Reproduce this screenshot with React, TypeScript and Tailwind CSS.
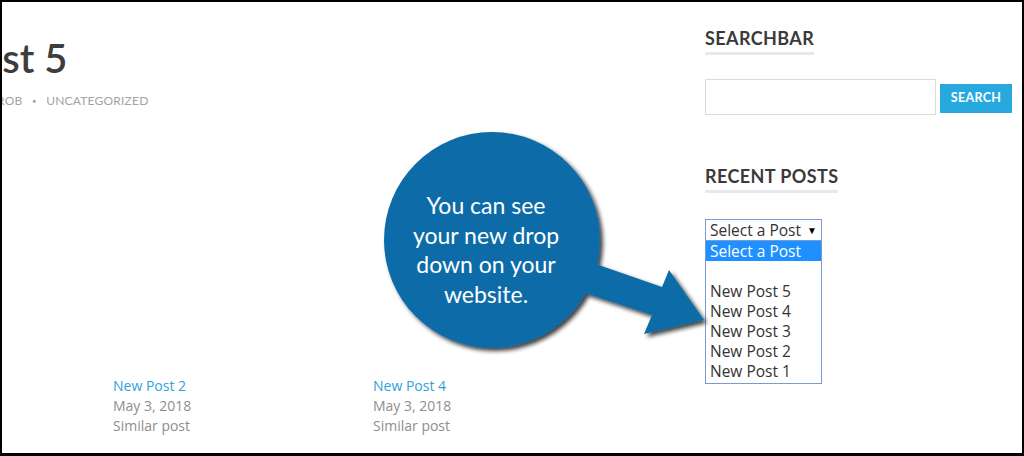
import React from "react"

const heading = "font-['Lato',sans-serif]"
const body = "font-['Open_Sans',sans-serif]"

const posts = ["New Post 5", "New Post 4", "New Post 3", "New Post 2", "New Post 1"]

const related = [
  { title: "New Post 2", date: "May 3, 2018", excerpt: "Similar post" },
  { title: "New Post 4", date: "May 3, 2018", excerpt: "Similar post" },
]

function WidgetTitle({ children, className = "" }: { children: React.ReactNode; className?: string }) {
  return (
    <div className={`flex ${className}`}>
      <h2
        className={`${heading} text-[18px] font-bold leading-[24px] tracking-[0.4px] text-[#3a3a3a] pb-[2px] border-b-[3px] border-[#e8e8ea] uppercase`}
      >
        {children}
      </h2>
    </div>
  )
}

function PostDropdown() {
  return (
    <div className={`mt-[26px] w-[117px] ${body} text-[15.5px] text-[#333]`}>
      <div className="h-[22px] border border-[#7a9bd0] flex items-center justify-between pl-[4px] pr-[4px] leading-[20px]">
        <span>Select a Post</span>
        <span className="text-[10px] text-black">▼</span>
      </div>
      <ul className="border border-t-0 border-[#7a9bd0] pb-[2px] leading-[20px]">
        <li className="h-[20px] bg-[#1e90ff] text-white pl-[4px]">Select a Post</li>
        <li className="h-[20px]" />
        {posts.map(p => (
          <li key={p} className="h-[20px] pl-[4px]">{p}</li>
        ))}
      </ul>
    </div>
  )
}

// speech bubble pointing at the dropdown
function Callout() {
  return (
    <div className="absolute left-[370px] top-[120px] w-[350px] h-[240px] pointer-events-none">
      <svg width="350" height="240" viewBox="0 0 350 240" className="absolute inset-0">
        <defs>
          <filter id="bubbleShadow" x="-10%" y="-10%" width="130%" height="130%">
            <feDropShadow dx="3" dy="3" stdDeviation="2" floodColor="#000" floodOpacity="0.75" />
          </filter>
        </defs>
        <g filter="url(#bubbleShadow)" fill="#0a6ca8">
          <circle cx="120" cy="118" r="108" />
          <polygon points="195,132 290,165 297,148 332,198 272,212 280,193 195,165" />
        </g>
      </svg>
      <div
        className={`absolute left-0 top-[69px] w-[228px] text-center text-white ${heading} text-[23px] leading-[29.5px]`}
      >
        You can see
        <br />
        your new drop
        <br />
        down on your
        <br />
        website.
      </div>
    </div>
  )
}

export default function App() {
  return (
    <div className="relative w-[1024px] h-[456px] bg-white border-black border-t-2 border-l-2 border-r-2 border-b-[3px] overflow-hidden">
      <div className="flex h-full">
        {/* post column */}
        <div className="w-[703px] shrink-0">
          <h1 className={`mt-[32px] -ml-[46px] whitespace-nowrap ${heading} text-[40px] font-semibold leading-[48px] text-[#3d3d3d]`}>
            Post 5
          </h1>
          <div className={`mt-[11px] -ml-[5px] flex items-center ${heading} text-[12px] leading-[16px] tracking-[0.2px] text-[#a3a3a3] uppercase`}>
            <span>Rob</span>
            <span className="mx-[10px] text-[6px]">●</span>
            <span>Uncategorized</span>
          </div>
          <div className={`mt-[267px] pl-[111px] grid grid-cols-[260px_260px] ${body} text-[14px] leading-[20px]`}>
            {related.map(r => (
              <div key={r.title}>
                <a className="block text-[#2ea3d9]">{r.title}</a>
                <div className="text-[#8e8e8e]">{r.date}</div>
                <div className="text-[#8e8e8e]">{r.excerpt}</div>
              </div>
            ))}
          </div>
        </div>

        {/* sidebar */}
        <aside className="w-[307px] shrink-0 pt-[24px]">
          <WidgetTitle>Searchbar</WidgetTitle>
          <div className="mt-[24px] flex items-end gap-[4px]">
            <input className="w-[231px] h-[36px] border border-[#dcdce0] outline-none" />
            <button className={`mb-[2px] w-[72px] h-[29px] bg-[#27a9e0] text-white ${heading} font-bold text-[12.5px] tracking-[0.3px]`}>
              SEARCH
            </button>
          </div>
          <WidgetTitle className="mt-[49px]">Recent Posts</WidgetTitle>
          <PostDropdown />
        </aside>
      </div>
      <Callout />
    </div>
  )
}
